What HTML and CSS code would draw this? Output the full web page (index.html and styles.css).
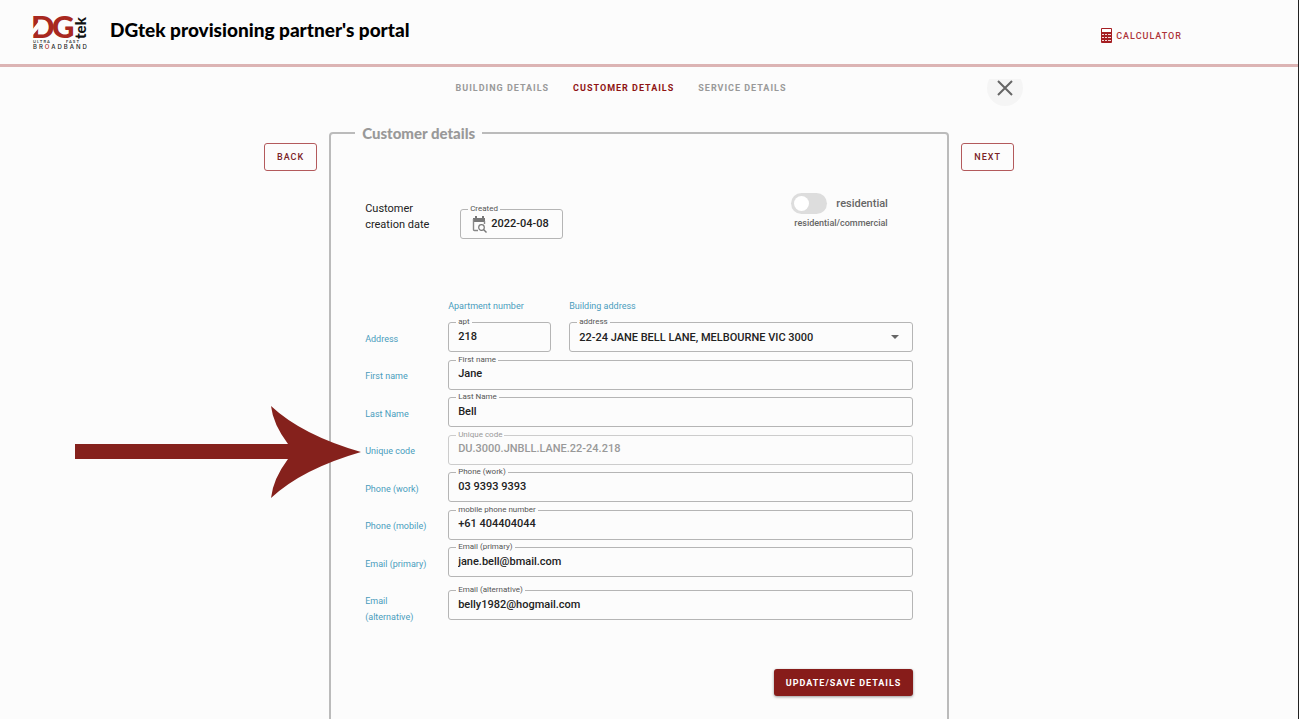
FILE: index.html
```html
<!DOCTYPE html>
<html lang="en">
<head>
<meta charset="utf-8">
<title>DGtek provisioning partner's portal</title>
<link rel="stylesheet" href="styles.css">
</head>
<body>
<div class="page">
  <header class="topbar">
    <svg class="logo" viewBox="0 0 54 35" role="img" aria-label="DGtek Ultra Fast Broadband">
      <text class="logo-dg" x="-2" y="23">D</text>
      <text class="logo-dg" x="19" y="23">G</text>
      <path class="logo-cut" d="M-1 15L6 6v7l-7 8z"/>
      <text class="logo-tek" transform="translate(53 24) rotate(-90)">tek</text>
      <text class="logo-small logo-ultra" x="0" y="28">ULTRA</text>
      <text class="logo-small logo-ultra" x="33" y="28">FAST</text>
      <text class="logo-small logo-broad" x="0" y="34">BR<tspan class="logo-red">O</tspan>ADBAND</text>
    </svg>
    <h1 class="title">DGtek provisioning partner's portal</h1>
    <a class="calculator" href="#">
      <svg class="calculator-icon" viewBox="0 0 11 15" aria-hidden="true">
        <rect width="11" height="15" rx="1" fill="#a51e22"/>
        <path d="M1 1h9v3H1z" fill="#fff"/>
        <path d="M1 6h2v1H1zM4 6h2v1H4zM7 6h3v1H7zM1 9h2v1H1zM4 9h2v1H4zM7 9h3v1H7zM1 12h2v1H1zM4 12h2v1H4zM7 12h3v1H7z" fill="#f3d9d9"/>
      </svg>
      CALCULATOR
    </a>
  </header>

  <main class="content">
    <div class="steps">
      <nav class="tabs">
        <a class="tab" href="#">BUILDING DETAILS</a>
        <a class="tab tab-active" href="#" aria-current="step">CUSTOMER DETAILS</a>
        <a class="tab" href="#">SERVICE DETAILS</a>
      </nav>
      <button class="close" type="button" aria-label="Close">
        <svg viewBox="0 0 16 16" width="16" height="16" aria-hidden="true"><path d="M1 1l14 14M15 1L1 15" stroke="#666" stroke-width="2" fill="none"/></svg>
      </button>
    </div>

    <form class="wizard">
      <button class="nav-button" type="button">BACK</button>
      <fieldset class="card">
        <legend class="card-title">Customer details</legend>

        <div class="summary">
          <label class="summary-label" for="created">Customer creation date</label>
          <div class="field date-field">
            <span class="caption">Created</span>
            <svg class="date-icon" viewBox="0 0 15 17" aria-hidden="true">
              <path d="M1 2h12v4H1zM3 0h2v3H3zM10 0h2v3h-2z" fill="#777"/>
              <path d="M6 14.500H2.500Q1.500 14.500 1.500 13.500V3M12.500 5v3" fill="none" stroke="#888" stroke-width="1.400"/>
              <circle cx="9.500" cy="11.500" r="2.800" fill="none" stroke="#777" stroke-width="1.200"/>
              <path d="M11.500 13.500l3 3" stroke="#777" stroke-width="1.400"/>
            </svg>
            <input class="input" id="created" type="text" value="2022-04-08">
          </div>
          <div class="kind">
            <label class="switch-row">
              <input class="switch" type="checkbox" role="switch">
              residential
            </label>
            <span class="kind-hint">residential/commercial</span>
          </div>
        </div>

        <div class="headings">
          <span>Apartment number</span>
          <span>Building address</span>
        </div>

        <div class="rows">
          <div class="row">
            <label class="row-label" for="apt">Address</label>
            <div class="address">
              <div class="field"><span class="caption">apt</span><input class="input" id="apt" type="text" value="218"></div>
              <div class="field">
                <label class="caption" for="address">address</label>
                <select class="input select" id="address"><option>22-24 JANE BELL LANE, MELBOURNE VIC 3000</option></select>
                <svg class="caret" viewBox="0 0 8 4" aria-hidden="true"><path d="M0 0h8L4 4z" fill="#666"/></svg>
              </div>
            </div>
          </div>
          <div class="row">
            <label class="row-label" for="first">First name</label>
            <div class="field"><span class="caption">First name</span><input class="input" id="first" type="text" value="Jane"></div>
          </div>
          <div class="row">
            <label class="row-label" for="last">Last Name</label>
            <div class="field"><span class="caption">Last Name</span><input class="input" id="last" type="text" value="Bell"></div>
          </div>
          <div class="row">
            <label class="row-label" for="code">Unique code</label>
            <div class="field field-disabled"><span class="caption">Unique code</span><input class="input" id="code" type="text" value="DU.3000.JNBLL.LANE.22-24.218" disabled></div>
            <svg class="pointer" viewBox="0 0 286 92" aria-hidden="true"><path d="M0 38H213Q198 18 196 0Q227 29 286 46Q227 63 196 92Q198 73 213 53H0z" fill="#85211c"/></svg>
          </div>
          <div class="row">
            <label class="row-label" for="work">Phone (work)</label>
            <div class="field"><span class="caption">Phone (work)</span><input class="input" id="work" type="text" value="03 9393 9393"></div>
          </div>
          <div class="row">
            <label class="row-label" for="mobile">Phone (mobile)</label>
            <div class="field"><span class="caption">mobile phone number</span><input class="input" id="mobile" type="text" value="+61 404404044"></div>
          </div>
          <div class="row">
            <label class="row-label" for="email">Email (primary)</label>
            <div class="field"><span class="caption">Email (primary)</span><input class="input" id="email" type="text" value="jane.bell@bmail.com"></div>
          </div>
        </div>
        <div class="row row-tall">
          <label class="row-label" for="email2">Email (alternative)</label>
          <div class="field"><span class="caption">Email (alternative)</span><input class="input" id="email2" type="text" value="belly1982@hogmail.com"></div>
        </div>

        <div class="actions"><button class="save" type="submit">UPDATE/SAVE DETAILS</button></div>
      </fieldset>
      <button class="nav-button" type="button">NEXT</button>
    </form>
  </main>
</div>
</body>
</html>
```
FILE: styles.css
```css
* { box-sizing: border-box; }
body {
  margin: 0;
  background: #fcfcfc;
  font-family: Roboto, "Liberation Sans", sans-serif;
  color: #222;
}
.page {
  height: 100vh;
  overflow-y: auto;
  scrollbar-width: none;
  border-right: 1px solid #222;
}
a { text-decoration: none; }
button { font-family: inherit; cursor: pointer; }

.topbar {
  display: flex;
  align-items: center;
  height: 67px;
  padding: 0 116px 0 33px;
  border-bottom: 3px solid #dcb4b4;
}
.logo { width: 54px; height: 35px; overflow: visible; }
.logo-dg { font: 900 31px Lato, sans-serif; fill: #a82820; }
.logo-cut { fill: #fcfcfc; }
.logo-tek { font: 900 15px Lato, sans-serif; fill: #111; }
.logo-small { font-family: Inter, sans-serif; font-weight: 500; fill: #222; }
.logo-ultra { font-size: 4px; letter-spacing: 1px; }
.logo-broad { font-size: 6px; letter-spacing: 2px; }
.logo-red { fill: #a82820; }
.title {
  margin: 0 auto 5px 23px;
  font: 900 19px/24px Lato, sans-serif;
  color: #000;
}
.calculator {
  display: flex;
  align-items: center;
  gap: 4px;
  margin-top: 7px;
  font-size: 9px;
  font-weight: 500;
  letter-spacing: 1px;
  color: #ad3338;
}
.calculator-icon { width: 11px; height: 15px; }

.content { padding: 3px 20px 0 0; }
.steps {
  display: flex;
  align-items: center;
  max-width: 768px;
  margin: 0 auto;
}
.tabs { flex: 1; display: flex; justify-content: center; gap: 24px; }
.tab { font-size: 9px; font-weight: 700; letter-spacing: 1px; color: #999; }
.tab-active { color: #8f1414; }
.close {
  display: grid;
  place-items: center;
  width: 36px;
  height: 36px;
  padding: 0;
  border: 0;
  border-radius: 50%;
  background: #f5f5f5;
  clip-path: inset(9px 0 0 0);
}

.wizard {
  display: flex;
  align-items: flex-start;
  gap: 12px;
  max-width: 750px;
  margin: 17px auto 0;
}
.nav-button {
  height: 28px;
  margin-top: 20px;
  padding: 0 12px;
  border: 1px solid #b35a5c;
  border-radius: 3px;
  background: transparent;
  font-size: 9px;
  font-weight: 500;
  letter-spacing: 1px;
  color: #7a2226;
}
.card {
  flex: 1;
  min-width: 0;
  margin: 0;
  padding: 0 34px 60px;
  border: 2px solid #bbb;
  border-radius: 4px;
}
.card-title {
  margin-left: -10px;
  padding: 0 7px;
  font: 900 15px/20px Lato, sans-serif;
  color: #999;
}

.summary { display: flex; align-items: flex-start; padding-top: 50px; }
.summary-label {
  width: 95px;
  padding: 8px 20px 0 0;
  font-size: 11px;
  line-height: 16px;
}
.field {
  position: relative;
  display: flex;
  align-items: center;
  height: 30px;
  border: 1px solid #b5b5b5;
  border-radius: 3px;
}
.caption {
  position: absolute;
  top: -6px;
  left: 7px;
  padding: 0 2px;
  background: #fcfcfc;
  font-size: 8px;
  line-height: 10px;
  color: #555;
}
.input {
  width: 100%;
  height: 26px;
  padding: 0 9px 2px;
  border: 0;
  background: transparent;
  font: 500 11px Roboto, sans-serif;
  color: #222;
}
.date-field { width: 103px; margin-top: 16px; padding-left: 11px; }
.date-icon { flex: none; width: 15px; height: 17px; }
.date-field .input { padding: 0 0 2px 4px; }
.kind { margin-left: auto; width: 122px; display: grid; gap: 2px; }
.switch-row {
  display: flex;
  align-items: center;
  gap: 9px;
  font-size: 11px;
  font-weight: 500;
  color: #666;
}
.switch {
  appearance: none;
  width: 36px;
  height: 21px;
  margin: 0;
  padding: 3px;
  border-radius: 11px;
  background: #ddd;
}
.switch::before {
  content: "";
  display: block;
  width: 15px;
  height: 15px;
  border-radius: 50%;
  background: #fff;
}
.switch:checked::before { margin-left: auto; }
.kind-hint { padding-left: 3px; font-size: 9px; font-weight: 500; line-height: 14px; color: #666; }

.headings {
  display: grid;
  grid-template-columns: 103px 1fr;
  column-gap: 18px;
  margin: 59px 0 8px;
  padding-left: 83px;
  font-size: 9px;
  line-height: 16px;
  color: #4a9dbd;
}
.rows {
  display: flex;
  flex-direction: column;
  justify-content: space-between;
  min-height: 255px;
}
.row {
  position: relative;
  display: grid;
  grid-template-columns: 83px 1fr;
  align-items: center;
  min-height: 30px;
}
.row-tall { margin-top: 8px; }
.row-label { padding: 3px 16px 0 0; font-size: 9px; line-height: 16px; color: #4a9dbd; }
.row-tall .row-label { padding-top: 8px; }
.address { display: grid; grid-template-columns: 103px 1fr; gap: 18px; }
.select { appearance: none; padding-bottom: 0; }
.caret { position: absolute; right: 13px; top: 12px; width: 8px; height: 4px; pointer-events: none; }
.field-disabled { border-color: #ccc; }
.field-disabled .caption { color: #999; }
.field-disabled .input { color: #999; }
.pointer { position: absolute; right: calc(100% + 4px); top: -29px; width: 286px; height: 92px; }

.actions { display: flex; justify-content: flex-end; margin-top: 44px; }
.save {
  height: 27px;
  padding: 0 12px;
  border: 0;
  border-radius: 3px;
  background: #871c1a;
  box-shadow: 0 1px 3px rgba(0, 0, 0, .4);
  font-size: 9px;
  font-weight: 700;
  letter-spacing: 1px;
  color: #fff;
}
```
